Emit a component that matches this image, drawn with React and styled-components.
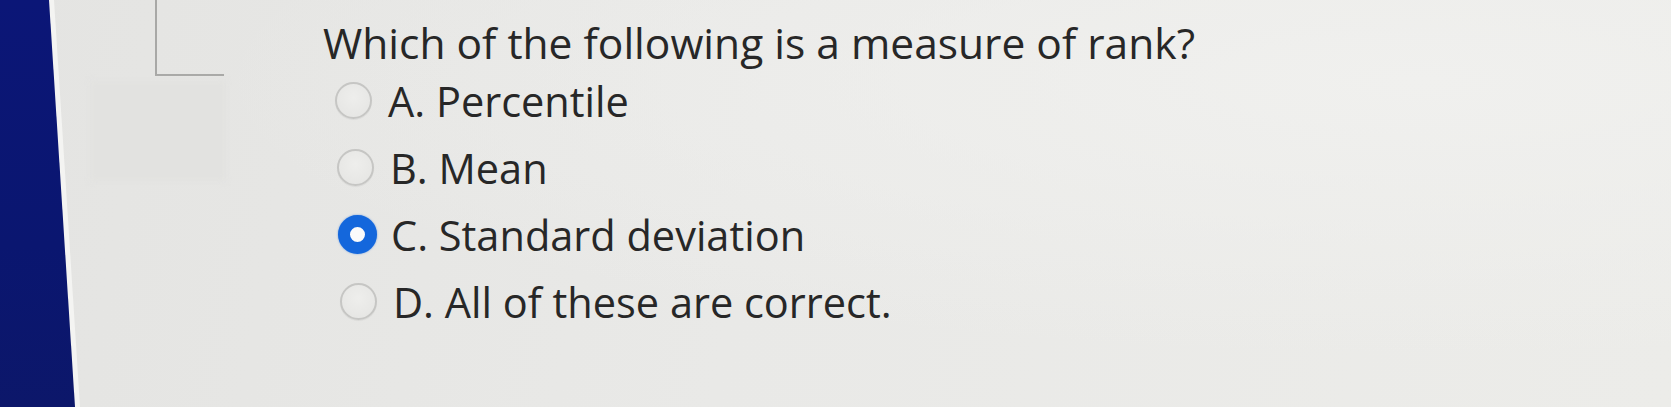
import React from "react";
import styled, { createGlobalStyle } from "styled-components";

const GlobalStyle = createGlobalStyle`
  html, body {
    margin: 0;
    padding: 0;
    background: #e6e6e4;
  }
  body {
    font-family: "Open Sans", "Noto Sans", sans-serif;
    color: #262626;
  }
`;

const Page = styled.div`
  display: flex;
  width: 1671px;
  height: 407px;
  overflow: hidden;
  background:
    radial-gradient(ellipse at 85% 20%, #f0f0ee 0%, rgba(240, 240, 238, 0) 60%),
    linear-gradient(100deg, #e4e4e2 0%, #e9e9e7 45%, #ecece9 100%);
`;

const Strip = styled.div`
  position: relative;
  flex: 0 0 80px;
  background: #f4f4f2;
  clip-path: polygon(0 0, 54px 0, 80px 100%, 0 100%);

  &::before {
    content: "";
    position: absolute;
    inset: 0;
    background: linear-gradient(180deg, #0b1677 0%, #0a1670 60%, #0c176a 100%);
    clip-path: polygon(0 0, 49px 0, 75px 100%, 0 100%);
  }
`;

const Sidebar = styled.div`
  flex: 0 0 243px;
  display: flex;
  flex-direction: column;
`;

const CornerBox = styled.div`
  margin-left: 75px;
  width: 67px;
  height: 74px;
  border-left: 2px solid #a8a8a6;
  border-bottom: 2px solid #a8a8a6;
`;

const ShadeBox = styled.div`
  margin: 5px 0 0 10px;
  width: 136px;
  height: 100px;
  background: #e2e2e0;
  filter: blur(3px);
`;

const Content = styled.div`
  flex: 1;
  padding-top: 17px;
`;

const Question = styled.h1`
  margin: 0;
  font-size: 42.5px;
  line-height: 52px;
  font-weight: 400;
  color: #272727;
`;

const OptionList = styled.div`
  display: flex;
  flex-direction: column;
  gap: 16px;
  margin-top: 6px;
  padding-left: 12px;
`;

const OptionRow = styled.label`
  display: flex;
  align-items: center;
  gap: 16px;
  height: 51px;
  padding-left: ${(p) => p.shift}px;
  font-size: 41.5px;
  color: #272727;
`;

const Radio = styled.span`
  flex: 0 0 auto;
  box-sizing: border-box;
  width: ${(p) => (p.checked ? 39 : 37)}px;
  height: ${(p) => (p.checked ? 39 : 37)}px;
  margin-right: ${(p) => (p.checked ? -2 : 0)}px;
  border-radius: 50%;
  border: ${(p) => (p.checked ? "12px solid #1467dc" : "2px solid #c6c6c4")};
  background: ${(p) =>
    p.checked
      ? "#fbfbfb"
      : "radial-gradient(circle at 50% 40%, #eeeeec 0%, #e4e4e2 100%)"};
  box-shadow: ${(p) =>
    p.checked ? "0 0 2px rgba(20, 103, 220, 0.6)" : "0 1px 1px rgba(0, 0, 0, 0.06)"};
`;

const options = [
  { label: "A. Percentile", shift: 0 },
  { label: "B. Mean", shift: 2 },
  { label: "C. Standard deviation", shift: 3, checked: true },
  { label: "D. All of these are correct.", shift: 5 },
];

const App = () => {
  return (
    <Page>
      <GlobalStyle />
      <Strip />
      <Sidebar>
        <CornerBox />
        <ShadeBox />
      </Sidebar>
      <Content>
        <Question>Which of the following is a measure of rank?</Question>
        <OptionList>
          {options.map((o) => (
            <OptionRow key={o.label} shift={o.shift}>
              <Radio checked={o.checked} />
              {o.label}
            </OptionRow>
          ))}
        </OptionList>
      </Content>
    </Page>
  );
};

export default App;
